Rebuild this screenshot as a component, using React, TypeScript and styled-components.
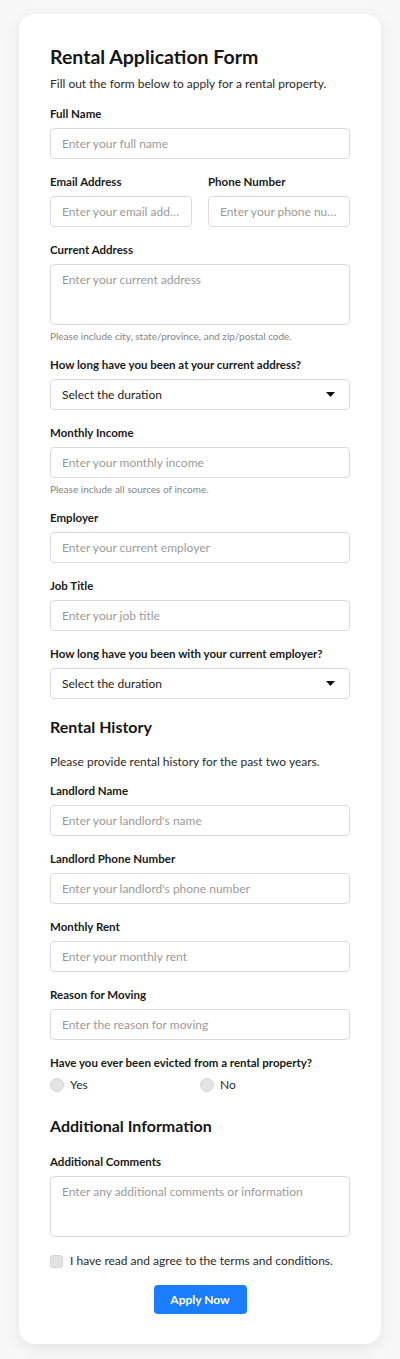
import React from "react";
import styled, { createGlobalStyle } from "styled-components";

const Global = createGlobalStyle`
  * { box-sizing: border-box; }
  body {
    margin: 0;
    background: #f7f7f7;
    font-family: Lato, "Noto Sans", sans-serif;
    color: #1d1d1d;
  }
`;

export default function App() {
  return (
    <>
      <Global />
      <Page>
        <Card>
          <Title>Rental Application Form</Title>
          <Intro>Fill out the form below to apply for a rental property.</Intro>

          <Field>
            <Label>Full Name</Label>
            <Input placeholder="Enter your full name" />
          </Field>

          <Row>
            <Field>
              <Label>Email Address</Label>
              <Input placeholder="Enter your email address" />
            </Field>
            <Field>
              <Label>Phone Number</Label>
              <Input placeholder="Enter your phone number" />
            </Field>
          </Row>

          <Field>
            <Label>Current Address</Label>
            <TextArea placeholder="Enter your current address" />
            <Hint>Please include city, state/province, and zip/postal code.</Hint>
          </Field>

          <Field>
            <Label>How long have you been at your current address?</Label>
            <Select>
              Select the duration
              <Caret />
            </Select>
          </Field>

          <Field>
            <Label>Monthly Income</Label>
            <Input placeholder="Enter your monthly income" />
            <Hint>Please include all sources of income.</Hint>
          </Field>

          <Field>
            <Label>Employer</Label>
            <Input placeholder="Enter your current employer" />
          </Field>

          <Field>
            <Label>Job Title</Label>
            <Input placeholder="Enter your job title" />
          </Field>

          <Field>
            <Label>How long have you been with your current employer?</Label>
            <Select>
              Select the duration
              <Caret />
            </Select>
          </Field>

          <Section>Rental History</Section>
          <SectionText>Please provide rental history for the past two years.</SectionText>

          <Field>
            <Label>Landlord Name</Label>
            <Input placeholder="Enter your landlord's name" />
          </Field>

          <Field>
            <Label>Landlord Phone Number</Label>
            <Input placeholder="Enter your landlord's phone number" />
          </Field>

          <Field>
            <Label>Monthly Rent</Label>
            <Input placeholder="Enter your monthly rent" />
          </Field>

          <Field>
            <Label>Reason for Moving</Label>
            <Input placeholder="Enter the reason for moving" />
          </Field>

          <Field>
            <Label>Have you ever been evicted from a rental property?</Label>
            <Radios>
              <Option>
                <Radio />
                Yes
              </Option>
              <Option>
                <Radio />
                No
              </Option>
            </Radios>
          </Field>

          <Section $top={21}>Additional Information</Section>

          <Field $top={16}>
            <Label>Additional Comments</Label>
            <TextArea placeholder="Enter any additional comments or information" />
          </Field>

          <Agree>
            <Check />
            I have read and agree to the terms and conditions.
          </Agree>

          <Actions>
            <Button>Apply Now</Button>
          </Actions>
        </Card>
      </Page>
    </>
  );
}

const Caret = () => (
  <svg width="9" height="5" viewBox="0 0 9 5">
    <path d="M0 0h9L4.5 5z" fill="#111" />
  </svg>
);

const Page = styled.div`
  padding: 14px 19px 15px;
`;

const Card = styled.div`
  background: #fff;
  border-radius: 16px;
  box-shadow: 0 4px 16px rgba(0, 0, 0, 0.08);
  padding: 29px 31px 30px;
`;

const Title = styled.h1`
  margin: 0;
  font-size: 19.5px;
  line-height: 28px;
  font-weight: 700;
  color: #161616;
`;

const Intro = styled.p`
  margin: 4px 0 13px;
  font-size: 12px;
  line-height: 18px;
  color: #2a2a2a;
`;

const Field = styled.div<{ $top?: number }>`
  display: flex;
  flex-direction: column;
  margin: ${(p) => p.$top ?? 0}px 0 15px;
  min-width: 0;
`;

const Row = styled.div`
  display: grid;
  grid-template-columns: 1fr 1fr;
  column-gap: 16px;
`;

const Label = styled.label`
  font-size: 11.5px;
  line-height: 16px;
  font-weight: 700;
  color: #1a1a1a;
  margin-bottom: 6px;
  white-space: nowrap;
`;

const controlBase = `
  width: 100%;
  border: 1px solid #dcdcdc;
  border-radius: 4px;
  background: #fff;
  font-family: Lato, "Noto Sans", sans-serif;
  font-size: 12px;
  color: #333;
  padding: 0 11px;
  outline: none;
  &::placeholder { color: #9a9a9a; }
`;

const Input = styled.input`
  ${controlBase}
  height: 31px;
  text-overflow: ellipsis;
`;

const TextArea = styled.textarea`
  ${controlBase}
  height: 61px;
  padding-top: 7px;
  resize: none;
  display: block;
`;

const Select = styled.div`
  ${controlBase}
  height: 31px;
  display: flex;
  align-items: center;
  justify-content: space-between;
  padding: 0 14px 0 11px;
  color: #222;
`;

const Hint = styled.span`
  margin-top: 5px;
  font-size: 10px;
  line-height: 12px;
  color: #858585;
`;

const Section = styled.h2<{ $top?: number }>`
  margin: ${(p) => p.$top ?? 16}px 0 0;
  font-size: 16px;
  line-height: 24px;
  font-weight: 700;
  color: #161616;
`;

const SectionText = styled.p`
  margin: 14px 0 12px;
  font-size: 12px;
  line-height: 18px;
  color: #2a2a2a;
`;

const Radios = styled.div`
  display: flex;
`;

const Option = styled.label`
  flex: 0 0 150px;
  display: flex;
  align-items: center;
  gap: 6px;
  font-size: 12px;
  line-height: 16px;
  color: #2a2a2a;
`;

const Radio = styled.span`
  width: 14px;
  height: 14px;
  border-radius: 50%;
  background: #e3e3e3;
  border: 1px solid #d6d6d6;
`;

const Agree = styled.label`
  display: flex;
  align-items: center;
  gap: 7px;
  font-size: 12px;
  line-height: 18px;
  color: #2a2a2a;
`;

const Check = styled.span`
  width: 13px;
  height: 13px;
  border-radius: 3px;
  background: #e3e3e3;
  border: 1px solid #d6d6d6;
`;

const Actions = styled.div`
  display: flex;
  justify-content: center;
  margin-top: 15px;
`;

const Button = styled.button`
  width: 93px;
  height: 29px;
  border: none;
  border-radius: 4px;
  background: #1a7cff;
  color: #fff;
  font-family: Lato, "Noto Sans", sans-serif;
  font-size: 12px;
  font-weight: 700;
`;
